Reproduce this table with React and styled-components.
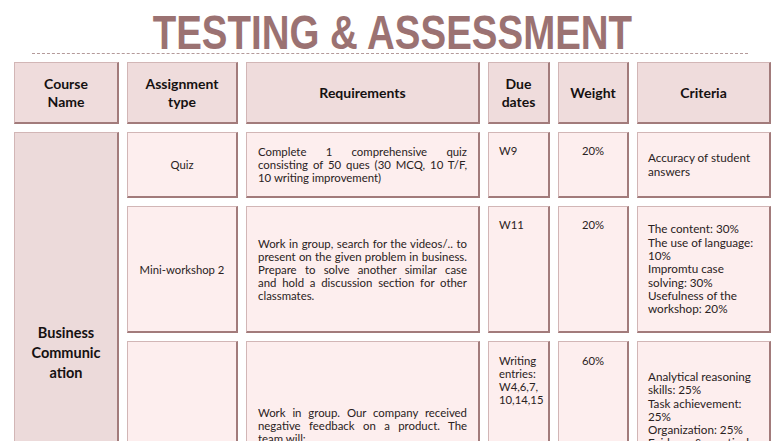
import React from 'react';
import styled, { createGlobalStyle } from 'styled-components';

const GlobalStyle = createGlobalStyle`
  body {
    margin: 0;
    background: #fff;
    font-family: Lato, "Liberation Sans", sans-serif;
    color: #1f1a1a;
  }
`;

const Page = styled.div`
  width: 784px;
  display: flex;
  flex-direction: column;
  align-items: center;
`;

const Title = styled.h1`
  margin: 11px 0 0;
  font-family: "Liberation Sans", Arial, sans-serif;
  font-weight: 700;
  font-size: 49px;
  line-height: 42px;
  color: #9b7272;
  transform: scaleX(0.785);
  white-space: nowrap;
`;

const Rule = styled.div`
  width: 716px;
  margin-left: -4px;
  border-top: 1px dashed #b49a9a;
  margin-bottom: 8px;
`;

const Table = styled.div`
  align-self: flex-start;
  margin-left: 14px;
  display: grid;
  grid-template-columns: 105px 111px 234px 62px 71px 134px;
  grid-template-rows: 62px 66px 127px 234px;
  column-gap: 8px;
  row-gap: 8px;
`;

const Cell = styled.div`
  box-sizing: border-box;
  display: flex;
  flex-direction: column;
  justify-content: ${p => p.$valign || 'center'};
  align-items: stretch;
  padding: ${p => p.$pad || '0 10px'};
  background: #fdeeee;
  border-top: 1px solid #d2b6b6;
  border-left: 1px solid #d2b6b6;
  border-right: 2px solid #a27b7b;
  border-bottom: 2px solid #a27b7b;
  text-align: ${p => p.$align || 'left'};
  font-size: 11.3px;
  line-height: 13px;
  color: #2a2222;
  grid-row: ${p => p.$row || 'auto'};
`;

const HeadCell = styled(Cell)`
  background: #efdcdc;
  text-align: center;
  font-weight: 700;
  font-size: 14px;
  line-height: 18px;
  color: #151111;
`;

const CourseCell = styled(Cell)`
  background: #ecdada;
  text-align: center;
  font-weight: 700;
  font-size: 14.5px;
  line-height: 20px;
  color: #151111;
`;

const JLine = styled.div`
  font-size: 11.4px;
  line-height: 13px;
  white-space: nowrap;
  text-align: ${p => (p.$last ? 'left' : 'justify')};
  text-align-last: ${p => (p.$last ? 'left' : 'justify')};
`;

const Criteria = styled.div`
  font-size: 11.7px;
  line-height: 13.3px;
`;

const headers = [
  <>Course<br />Name</>,
  <>Assignment<br />type</>,
  'Requirements',
  <>Due<br />dates</>,
  'Weight',
  'Criteria',
];

const Para = ({ lines }) =>
  lines.map((l, i) => (
    <JLine key={i} $last={l.last}>{l.t}</JLine>
  ));

const quizReq = [
  { t: 'Complete 1 comprehensive quiz' },
  { t: 'consisting of 50 ques (30 MCQ, 10 T/F,' },
  { t: '10 writing improvement)', last: true },
];

const workshopReq = [
  { t: 'Work in group, search for the videos/.. to' },
  { t: 'present on the given problem in business.' },
  { t: 'Prepare to solve another similar case' },
  { t: 'and hold a discussion section for other' },
  { t: 'classmates.', last: true },
];

const portfolioReq = [
  { t: 'Work in group. Our company received' },
  { t: 'negative feedback on a product. The' },
  { t: 'team will:', last: true },
  { t: '- analyze the feedback and find out' },
  { t: 'the causes of the problem;', last: true },
  { t: '- write a letter of response to the' },
  { t: 'customer;', last: true },
  { t: '- propose solutions for the product.', last: true },
];

export default function App() {
  return (
    <Page>
      <GlobalStyle />
      <Title>TESTING &amp; ASSESSMENT</Title>
      <Rule />
      <Table>
        {headers.map((h, i) => (
          <HeadCell key={i} $pad="0 4px">{h}</HeadCell>
        ))}

        <CourseCell $row="2 / 5" $pad="0 4px">
          <div>Business<br />Communic<br />ation</div>
        </CourseCell>

        {/* row 1 */}
        <Cell $align="center">Quiz</Cell>
        <Cell $pad="0 11px">
          <Para lines={quizReq} />
        </Cell>
        <Cell $valign="flex-start" $pad="11px 10px">W9</Cell>
        <Cell $valign="flex-start" $align="center" $pad="11px 4px">20%</Cell>
        <Cell>
          <Criteria>Accuracy of student<br />answers</Criteria>
        </Cell>

        {/* row 2 */}
        <Cell $align="center">Mini-workshop 2</Cell>
        <Cell $pad="0 11px">
          <Para lines={workshopReq} />
        </Cell>
        <Cell $valign="flex-start" $pad="11px 10px">W11</Cell>
        <Cell $valign="flex-start" $align="center" $pad="11px 4px">20%</Cell>
        <Cell>
          <Criteria>
            The content: 30%<br />
            The use of language:<br />
            10%<br />
            Impromtu case<br />
            solving: 30%<br />
            Usefulness of the<br />
            workshop: 20%
          </Criteria>
        </Cell>

        {/* row 3 */}
        <Cell $align="center">Writing portfolio</Cell>
        <Cell $pad="0 11px">
          <Para lines={portfolioReq} />
        </Cell>
        <Cell $valign="flex-start" $pad="12px 10px">
          Writing<br />entries:<br />W4,6,7,<br />10,14,15
        </Cell>
        <Cell $valign="flex-start" $align="center" $pad="12px 4px">60%</Cell>
        <Cell $valign="flex-start" $pad="28px 10px 0">
          <Criteria>
            Analytical reasoning<br />
            skills: 25%<br />
            Task achievement:<br />
            25%<br />
            Organization: 25%<br />
            Evidence&amp; practical<br />
            application: 25%
          </Criteria>
        </Cell>
      </Table>
    </Page>
  );
}
